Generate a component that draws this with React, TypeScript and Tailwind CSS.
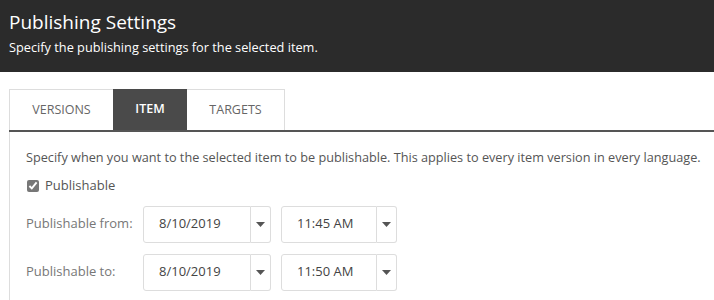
import React, { useState } from 'react';

const tabs = ['VERSIONS', 'ITEM', 'TARGETS'];

const Caret = () => (
  <svg width="9" height="5" viewBox="0 0 9 5" className="fill-[#555]">
    <path d="M0 0h9L4.5 5z" />
  </svg>
);

const PickerInput = ({ value, width }: { value: string; width: string }) => (
  <div className="flex h-[37px]">
    <div className={`${width} flex items-center pl-[15px] border border-[#ddd] rounded-l-[3px] text-[13px] text-[#444]`}>
      {value}
    </div>
    <div className="w-[20px] flex items-center justify-center border border-l-0 border-[#ddd] rounded-r-[3px]">
      <Caret />
    </div>
  </div>
);

export default function App() {
  const [active] = useState('ITEM');

  return (
    <div className="w-[714px] h-[300px] bg-white overflow-hidden font-['Open_Sans',sans-serif]">
      {/* Header */}
      <div className="h-[72px] bg-[#2b2b2b] pl-[9px] pt-[9px]">
        <h1 className="text-[19px] leading-[26px] text-white">Publishing Settings</h1>
        <p className="text-[12.75px] leading-[18px] text-white mt-[3px]">
          Specify the publishing settings for the selected item.
        </p>
      </div>

      {/* Tabs */}
      <div className="pl-[9px] pt-[17px]">
        <div className="flex border-b-2 border-[#555]">
          {tabs.map((tab) => (
            <div
              key={tab}
              className={`h-[41px] flex items-center justify-center text-[12.5px] ${
                tab === 'VERSIONS' ? 'w-[104px] border-l border-t' : tab === 'ITEM' ? 'w-[74px]' : 'w-[98px] border-t border-r'
              } ${tab === active ? 'bg-[#4a4a4a] text-white font-semibold' : 'bg-white text-[#666] border-[#ddd]'}`}
            >
              {tab}
            </div>
          ))}
        </div>

        {/* Content */}
        <div className="border-l border-[#ddd] pl-[16px] pt-[15px] h-[200px]">
          <p className="text-[12.7px] leading-[20px] text-[#555] whitespace-nowrap">
            Specify when you want to the selected item to be publishable. This applies to every item version in every language.
          </p>
          <label className="flex items-center gap-[6px] mt-[9px] text-[13px] text-[#555]">
            <input type="checkbox" defaultChecked className="w-[12px] h-[12px] accent-[#777] ml-[1px]" />
            Publishable
          </label>
          <div className="mt-[10px] flex flex-col gap-[11px]">
            {[
              ['Publishable from:', '8/10/2019', '11:45 AM'],
              ['Publishable to:', '8/10/2019', '11:50 AM'],
            ].map(([label, date, time]) => (
              <div key={label} className="flex items-center">
                <span className="w-[117px] text-[13px] text-[#777]">{label}</span>
                <PickerInput value={date} width="w-[108px]" />
                <div className="w-[10px]" />
                <PickerInput value={time} width="w-[96px]" />
              </div>
            ))}
          </div>
        </div>
      </div>
    </div>
  );
}
